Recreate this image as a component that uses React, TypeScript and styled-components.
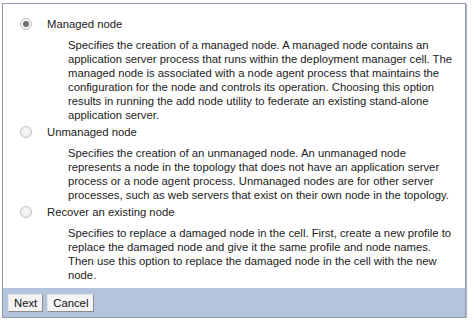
import styled, { createGlobalStyle } from "styled-components"
import { useState } from "react"

const GlobalStyle = createGlobalStyle`
    html, body {
        margin: 0;
        padding: 0;
        background: #ffffff;
    }
    body {
        font-family: "Liberation Sans", Arial, sans-serif;
        font-size: 11.3px;
        color: #222222;
    }
`

const Page = styled.div`
    padding: 3px 0 0 2px;
`
const Panel = styled.div`
    width: 462px;
    border: 1px solid #8e99ac;
    box-shadow: 1px 1px 1px #b9bfc9;
    background: #ffffff;
`
const Options = styled.div`
    padding: 13px 0 3px 16px;
`
const Option = styled.div`
    margin-bottom: 3px;
`
const OptionHead = styled.label`
    display: flex;
    align-items: center;
    height: 14px;
    cursor: default;
`
const Radio = styled.input`
    appearance: none;
    width: 12px;
    height: 12px;
    margin: 0 15px 0 1px;
    border-radius: 50%;
    border: 1px solid #c4c4c4;
    background: radial-gradient(circle at 50% 40%, #fafafa 0%, #e6e6e6 100%);
    position: relative;
    flex-shrink: 0;

    &:checked::after {
        content: "";
        position: absolute;
        left: 2px;
        top: 2px;
        width: 6px;
        height: 6px;
        border-radius: 50%;
        background: #6f6f6f;
    }
`
const Label = styled.span`
    line-height: 14px;
`
const Description = styled.p`
    margin: 7px 0 0 49px;
    width: 388px;
    line-height: 14px;
`
const Footer = styled.div`
    display: flex;
    gap: 4px;
    padding: 6px 5px 5px;
    background: #b5c4dd;
`
const Button = styled.button`
    font-family: "Liberation Sans", Arial, sans-serif;
    font-size: 11.3px;
    color: #111111;
    height: 18px;
    padding: 0 5px;
    background: #f4f4f4;
    border: 1px solid #8a8a8a;
    border-top-color: #e6e6e6;
    border-left-color: #e6e6e6;
    border-radius: 0;
`

const nodeTypes = [
    {
        id: "managed",
        label: "Managed node",
        text: "Specifies the creation of a managed node. A managed node contains an application server process that runs within the deployment manager cell. The managed node is associated with a node agent process that maintains the configuration for the node and controls its operation. Choosing this option results in running the add node utility to federate an existing stand-alone application server.",
    },
    {
        id: "unmanaged",
        label: "Unmanaged node",
        text: "Specifies the creation of an unmanaged node. An unmanaged node represents a node in the topology that does not have an application server process or a node agent process. Unmanaged nodes are for other server processes, such as web servers that exist on their own node in the topology.",
    },
    {
        id: "recover",
        label: "Recover an existing node",
        text: "Specifies to replace a damaged node in the cell. First, create a new profile to replace the damaged node and give it the same profile and node names. Then use this option to replace the damaged node in the cell with the new node.",
    },
]

export default function App() {

    const [selected, setSelected] = useState("managed")

    return (
        <>
            <GlobalStyle />
            <Page>
                <Panel>
                    <Options>
                        {
                            nodeTypes.map((item) => (
                                <Option key={item.id}>
                                    <OptionHead>
                                        <Radio
                                            type="radio"
                                            name="nodeType"
                                            checked={selected === item.id}
                                            onChange={() => setSelected(item.id)}
                                        />
                                        <Label>{item.label}</Label>
                                    </OptionHead>
                                    <Description>{item.text}</Description>
                                </Option>
                            ))
                        }
                    </Options>
                    <Footer>
                        <Button>Next</Button>
                        <Button>Cancel</Button>
                    </Footer>
                </Panel>
            </Page>
        </>
    )
}
